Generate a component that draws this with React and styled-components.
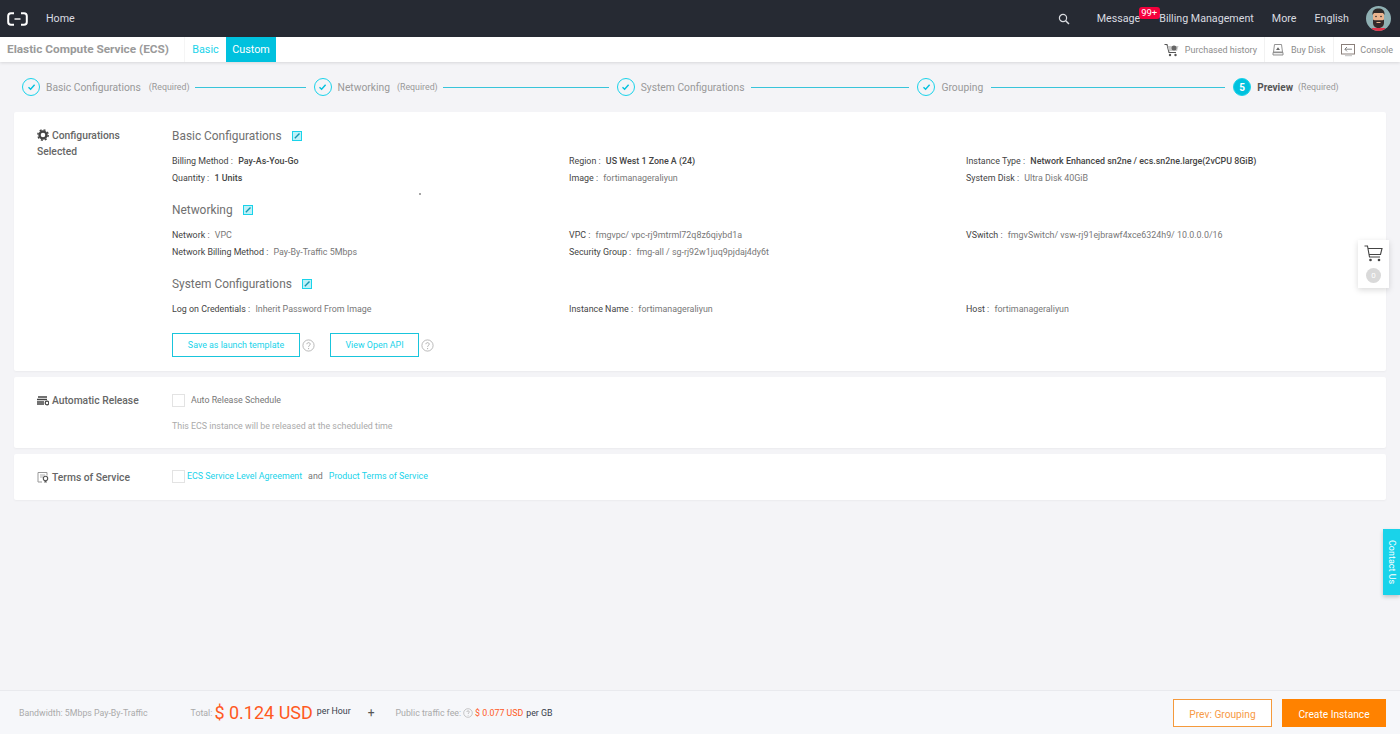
import React from "react";
import styled, { createGlobalStyle } from "styled-components";

const Global = createGlobalStyle`
  html, body { margin: 0; padding: 0; height: 100%; overflow: hidden; }
  body { font-family: Roboto, "Liberation Sans", sans-serif; background: #f4f4f7; color: #555; }
  * { box-sizing: border-box; }
`;

const Page = styled.div`
  position: relative;
  height: 734px;
  display: flex;
  flex-direction: column;
`;

const TopBar = styled.header`
  height: 37px;
  flex: none;
  background: #262a33;
  display: flex;
  align-items: center;
  padding: 0 9px 0 7px;
  color: #d9dbe0;
  font-size: 10.7px;
`;
const Logo = styled.svg`
  width: 21px;
  height: 14px;
  margin-right: 18px;
`;
const Spacer = styled.div`flex: 1;`;
const NavItem = styled.span`
  position: relative;
  margin-left: ${(p) => p.$ml || 0}px;
  white-space: nowrap;
`;
const Badge = styled.span`
  position: absolute;
  left: 42px;
  top: -5px;
  width: 21px;
  height: 12px;
  border-radius: 3px;
  background: #f5003c;
  color: #fff;
  font-size: 9.5px;
  line-height: 12px;
  text-align: center;
`;
const AvatarSvg = styled.svg`
  width: 25px;
  height: 25px;
  margin-left: 17px;
  border-radius: 50%;
`;

const SubBar = styled.div`
  height: 25px;
  flex: none;
  background: #fff;
  box-shadow: 0 1px 3px rgba(0, 0, 0, 0.12);
  display: flex;
  align-items: stretch;
  position: relative;
`;
const ProductTitle = styled.div`
  width: 184px;
  padding-left: 7px;
  font-size: 11.8px;
  font-weight: 700;
  color: #9a9a9a;
  line-height: 24px;
  white-space: nowrap;
`;
const Tab = styled.div`
  width: ${(p) => p.$w}px;
  text-align: center;
  font-size: 10.8px;
  line-height: 25px;
  color: ${(p) => (p.$active ? "#fff" : "#19d3ea")};
  background: ${(p) => (p.$active ? "#00c1de" : "transparent")};
  border-left: ${(p) => (p.$active ? "none" : "1px solid #f5f5f5")};
`;
const QuickLink = styled.div`
  display: flex;
  align-items: center;
  padding: 0 ${(p) => p.$pr}px 0 ${(p) => (p.$first ? 8 : 7)}px;
  gap: ${(p) => p.$gap}px;
  font-size: 9px;
  color: #8c8c8c;
  border-left: ${(p) => (p.$first ? "none" : "1px solid #f2f2f2")};
  white-space: nowrap;
`;

const Main = styled.main`
  flex: 1;
  padding: 0 14px;
`;
const Steps = styled.div`
  height: 50px;
  display: flex;
  align-items: center;
  padding-left: 8px;
`;
const StepCircle = styled.div`
  width: 18px;
  height: 18px;
  flex: none;
  border-radius: 50%;
  border: 1px solid #19d3ea;
  display: flex;
  align-items: center;
  justify-content: center;
  color: #00c1de;
  background: ${(p) => (p.$current ? "#00c1de" : "transparent")};
`;
const StepNumber = styled.span`
  color: #fff;
  font-size: 10px;
  font-weight: 700;
`;
const StepLabel = styled.span`
  margin-left: 6px;
  font-size: ${(p) => (p.$current ? 10 : 10.3)}px;
  white-space: nowrap;
  color: ${(p) => (p.$current ? "#555" : "#999")};
  font-weight: ${(p) => (p.$current ? 700 : 400)};
`;
const StepHint = styled.span`
  margin-left: ${(p) => p.$ml || 8}px;
  font-size: 8.8px;
  color: #999;
  white-space: nowrap;
`;
const StepLine = styled.div`
  width: ${(p) => p.$w}px;
  height: 1px;
  flex: none;
  margin: 0 8px 0 ${(p) => p.$ml || 5}px;
  background: #38c4da;
`;

const Card = styled.section`
  background: #fff;
  border-radius: 2px;
  box-shadow: 0 1px 2px rgba(0, 0, 0, 0.04);
  margin-bottom: 6px;
  height: ${(p) => p.$h}px;
  display: flex;
  padding-left: 23px;
`;
const SideTitle = styled.div`
  width: 135px;
  flex: none;
  padding-top: 16px;
  font-size: 10.3px;
  line-height: 16px;
  color: #666;
  font-weight: 500;
`;
const SideIcon = styled.svg`
  width: 12px;
  height: 12px;
  margin-right: 3px;
  vertical-align: -2px;
`;
const CardBody = styled.div`
  flex: 1;
  padding-top: ${(p) => p.$pt || 0}px;
`;
const SectionHead = styled.div`
  height: 16px;
  display: flex;
  align-items: center;
  gap: 10px;
  font-size: 11.9px;
  color: #707070;
  margin-bottom: 9px;
`;
const EditIcon = styled.svg`
  width: 10px;
  height: 10px;
`;
const Grid = styled.div`
  display: grid;
  grid-template-columns: 397px 397px 1fr;
  grid-auto-rows: 17px;
  margin-bottom: 15px;
  font-size: 8.9px;
  line-height: 17px;
  white-space: nowrap;
`;
const Key = styled.span`color: #444;`;
const Val = styled.span`
  color: ${(p) => (p.$strong ? "#444" : "#777")};
  font-weight: ${(p) => (p.$strong ? 500 : 400)};
  margin-left: 3px;
`;
const ActionRow = styled.div`
  display: flex;
  align-items: center;
`;
const OutlineButton = styled.button`
  width: ${(p) => p.$w}px;
  height: 24px;
  border: 1px solid #19c5dc;
  background: #fff;
  color: #19d3ea;
  font-family: inherit;
  font-size: 8.9px;
  padding: 0;
`;
const Help = styled.svg`
  width: ${(p) => p.$s || 13}px;
  height: ${(p) => p.$s || 13}px;
  margin: 0 ${(p) => p.$mr || 0}px 0 ${(p) => p.$ml || 2}px;
  flex: none;
`;
const CheckRow = styled.div`
  display: flex;
  align-items: center;
  font-size: 8.85px;
  color: #777;
  height: 14px;
`;
const Checkbox = styled.span`
  width: 13px;
  height: 13px;
  flex: none;
  background: #fff;
  border: 1px solid #e3e3e3;
  margin-right: ${(p) => p.$mr}px;
`;
const Muted = styled.div`
  margin-top: 14px;
  font-size: 8.85px;
  color: #aaa;
`;
const Link = styled.span`color: #19d3ea;`;
const Conj = styled.span`margin: 0 6px;`;
const Dot = styled.span`
  position: absolute;
  left: 419px;
  top: 193px;
  width: 2px;
  height: 2px;
  border-radius: 50%;
  background: #888;
`;

const Footer = styled.footer`
  height: 44px;
  flex: none;
  background: #f6f7fa;
  border-top: 1px solid #e9eaee;
  display: flex;
  align-items: center;
  padding: 0 14px 0 19px;
  font-size: 8.8px;
  color: #aaa;
  white-space: nowrap;
`;
const Total = styled.span`
  margin-left: ${(p) => p.$ml || 0}px;
`;
const Price = styled.span`
  font-size: ${(p) => p.$fs}px;
  color: #ff5a1f;
  margin: 0 ${(p) => p.$mr}px 0 ${(p) => p.$ml}px;
`;
const Per = styled.span`
  color: #373d4b;
  margin-bottom: ${(p) => p.$mb || 0}px;
`;
const Plus = styled.span`
  margin: 0 21px 0 17px;
  font-size: 12px;
  color: #555;
`;
const PrevButton = styled.button`
  width: 99px;
  height: 28px;
  background: #fff;
  border: 1px solid #f59a3c;
  color: #f79a45;
  font-family: inherit;
  font-size: 10.2px;
  margin-left: auto;
  padding: 3px 0 0;
`;
const CreateButton = styled.button`
  width: 104px;
  height: 28px;
  background: #ff8200;
  border: none;
  color: #fff;
  font-family: inherit;
  font-size: 10.2px;
  margin-left: 10px;
  padding: 3px 0 0;
`;

const CartWidget = styled.div`
  position: absolute;
  left: 1358px;
  top: 240px;
  width: 31px;
  height: 48px;
  background: #fff;
  box-shadow: 0 2px 6px rgba(0, 0, 0, 0.15);
  display: flex;
  flex-direction: column;
  align-items: center;
  padding-top: 5px;
  gap: 6px;
`;
const CartCount = styled.span`
  width: 15px;
  height: 15px;
  border-radius: 50%;
  background: #d9d9d9;
  color: #fff;
  font-size: 8px;
  line-height: 15px;
  text-align: center;
`;
const Contact = styled.div`
  position: absolute;
  left: 1383px;
  top: 529px;
  width: 17px;
  height: 66px;
  background: #19d3ea;
  box-shadow: 0 2px 4px rgba(0, 0, 0, 0.2);
  color: #fff;
  font-size: 9px;
  padding-left: 1px;
  writing-mode: vertical-rl;
  display: flex;
  align-items: center;
  justify-content: center;
`;

const Check = () => (
  <svg width="9" height="8" viewBox="0 0 9 8">
    <path d="M1.500 4.200 3.600 6.200 7.600 1.800" fill="none" stroke="#00c1de" strokeWidth="1.400" />
  </svg>
);
const Edit = () => (
  <EditIcon viewBox="0 0 10 10">
    <rect x="0.500" y="0.500" width="9" height="9" fill="#bdf1f8" stroke="#19d3ea" />
    <path d="M2.800 7.200 7.500 2.500" stroke="#1597b0" strokeWidth="1.400" />
  </EditIcon>
);
const HelpIcon = (p) => (
  <Help viewBox="0 0 13 13" {...p}>
    <circle cx="6.500" cy="6.500" r="5.600" fill="none" stroke="#a8a8a8" strokeWidth="0.800" />
    <path d="M4.900 5.200c0-2.100 3.300-2.100 3.300 0 0 1.200-1.600 1.200-1.600 2.600" fill="none" stroke="#a8a8a8" strokeWidth="0.900" />
    <circle cx="6.600" cy="9.600" r="0.600" fill="#a8a8a8" />
  </Help>
);

export default function App() {
  return (
    <Page>
      <Global />
      <TopBar>
        <Logo viewBox="0 0 21 14">
          <path d="M7 1.200H4C2.200 1.200 1.200 2.200 1.200 4v6c0 1.800 1 2.800 2.800 2.800h3M14 1.200h3c1.800 0 2.800 1 2.800 2.800v6c0 1.800-1 2.800-2.800 2.800h-3" fill="none" stroke="#fff" strokeWidth="2" />
          <path d="M7.500 7h6" stroke="#fff" strokeWidth="1.400" />
        </Logo>
        <NavItem>Home</NavItem>
        <Spacer />
        <svg width="12" height="12" viewBox="0 0 12 12">
          <circle cx="5" cy="5" r="3.600" fill="none" stroke="#d9dbe0" strokeWidth="1.200" />
          <path d="M7.700 7.700 11 11" stroke="#d9dbe0" strokeWidth="1.500" />
        </svg>
        <NavItem $ml={27}>
          Message<Badge>99+</Badge>
        </NavItem>
        <NavItem $ml={19}>Billing Management</NavItem>
        <NavItem $ml={18}>More</NavItem>
        <NavItem $ml={18}>English</NavItem>
        <AvatarSvg viewBox="0 0 25 25">
          <rect width="25" height="25" fill="#8fb0b3" />
          <rect x="6" y="22" width="13" height="3" fill="#e0344b" />
          <path d="M7 7h11v9c0 4-2.500 6-5.500 6S7 20 7 16z" fill="#eab58f" />
          <path d="M6.500 9c-.5-5 2.500-6.500 6-6.500s6.500 1.500 6 6.500l-1.500-2H8z" fill="#2e2a28" />
          <path d="M7 13.500c1.500 1 3 .8 5.500.8s4 .2 5.500-.8v3.500c0 3-2.500 5-5.500 5S7 20 7 17z" fill="#33292a" />
          <path d="M10.500 16.500h4" stroke="#eab58f" strokeWidth="1" />
          <circle cx="10" cy="10.500" r="0.800" fill="#2e2a28" />
          <circle cx="15" cy="10.500" r="0.800" fill="#2e2a28" />
        </AvatarSvg>
      </TopBar>

      <SubBar>
        <ProductTitle>Elastic Compute Service (ECS)</ProductTitle>
        <Tab $w={42}>Basic</Tab>
        <Tab $w={50} $active>Custom</Tab>
        <Spacer />
        <QuickLink $first $pr={7} $gap={6}>
          <svg width="15" height="14" viewBox="0 0 15 14">
            <path d="M0.500 1.500h2.500l2 8h7" fill="none" stroke="#555" strokeWidth="1.100" />
            <path d="M3.500 3h11l-1.500 5h-8z" fill="#c8c8c8" />
            <circle cx="10" cy="5" r="2.500" fill="#666" />
            <circle cx="6" cy="12" r="1.200" fill="#555" />
            <circle cx="11.500" cy="12" r="1.200" fill="#555" />
          </svg>
          Purchased history
        </QuickLink>
        <QuickLink $pr={8} $gap={7}>
          <svg width="12" height="13" viewBox="0 0 12 13">
            <path d="M2.500 1.500h7l1 7.500h-9z" fill="none" stroke="#888" strokeWidth="0.900" />
            <path d="M1 9.500h10v2.500H1z" fill="#eee" stroke="#888" strokeWidth="0.900" />
            <path d="M4 7h4L6 4.200z" fill="#666" />
          </svg>
          Buy Disk
        </QuickLink>
        <QuickLink $pr={7} $gap={5}>
          <svg width="14" height="14" viewBox="0 0 14 14">
            <rect x="0.500" y="1.500" width="13" height="9.500" fill="none" stroke="#8a7f7a" />
            <path d="M11 6.200H4M6 4 3.800 6.200 6 8.400" fill="none" stroke="#666" strokeWidth="0.800" />
            <path d="M4 12.500h7" stroke="#ccc" strokeWidth="1.500" />
          </svg>
          Console
        </QuickLink>
      </SubBar>

      <Main>
        <Steps>
          <StepCircle><Check /></StepCircle>
          <StepLabel>Basic Configurations</StepLabel>
          <StepHint>(Required)</StepHint>
          <StepLine $w={111} />
          <StepCircle><Check /></StepCircle>
          <StepLabel>Networking</StepLabel>
          <StepHint $ml={7}>(Required)</StepHint>
          <StepLine $w={166} />
          <StepCircle><Check /></StepCircle>
          <StepLabel>System Configurations</StepLabel>
          <StepLine $w={158} $ml={7} />
          <StepCircle><Check /></StepCircle>
          <StepLabel>Grouping</StepLabel>
          <StepLine $w={234} $ml={8} />
          <StepCircle $current><StepNumber>5</StepNumber></StepCircle>
          <StepLabel $current>Preview</StepLabel>
          <StepHint $ml={5}>(Required)</StepHint>
        </Steps>

        <Card $h={259}>
          <SideTitle>
            <SideIcon viewBox="0 0 12 12">
              <circle cx="6" cy="6" r="3.500" fill="none" stroke="#444" strokeWidth="2.400" />
              <circle cx="6" cy="6" r="5.200" fill="none" stroke="#444" strokeWidth="1.400" strokeDasharray="2 2.080" />
            </SideIcon>
            Configurations
            <br />
            Selected
          </SideTitle>
          <CardBody $pt={16}>
            <SectionHead>Basic Configurations <Edit /></SectionHead>
            <Grid>
              <span><Key>Billing Method :</Key> <Val $strong>Pay-As-You-Go</Val></span>
              <span><Key>Region :</Key> <Val $strong>US West 1 Zone A (24)</Val></span>
              <span><Key>Instance Type :</Key> <Val $strong>Network Enhanced sn2ne / ecs.sn2ne.large(2vCPU 8GiB)</Val></span>
              <span><Key>Quantity :</Key> <Val $strong>1 Units</Val></span>
              <span><Key>Image :</Key> <Val>fortimanageraliyun</Val></span>
              <span><Key>System Disk :</Key> <Val>Ultra Disk 40GiB</Val></span>
            </Grid>
            <SectionHead>Networking <Edit /></SectionHead>
            <Grid>
              <span><Key>Network :</Key> <Val>VPC</Val></span>
              <span><Key>VPC :</Key> <Val>fmgvpc/ vpc-rj9mtrml72q8z6qiybd1a</Val></span>
              <span><Key>VSwitch :</Key> <Val>fmgvSwitch/ vsw-rj91ejbrawf4xce6324h9/ 10.0.0.0/16</Val></span>
              <span><Key>Network Billing Method :</Key> <Val>Pay-By-Traffic 5Mbps</Val></span>
              <span><Key>Security Group :</Key> <Val>fmg-all / sg-rj92w1juq9pjdaj4dy6t</Val></span>
              <span />
            </Grid>
            <SectionHead>System Configurations <Edit /></SectionHead>
            <Grid>
              <span><Key>Log on Credentials :</Key> <Val>Inherit Password From Image</Val></span>
              <span><Key>Instance Name :</Key> <Val>fortimanageraliyun</Val></span>
              <span><Key>Host :</Key> <Val>fortimanageraliyun</Val></span>
            </Grid>
            <ActionRow>
              <OutlineButton $w={128}>Save as launch template</OutlineButton>
              <HelpIcon $ml={2} $mr={15} />
              <OutlineButton $w={89}>View Open API</OutlineButton>
              <HelpIcon />
            </ActionRow>
          </CardBody>
        </Card>

        <Card $h={71}>
          <SideTitle>
            <SideIcon viewBox="0 0 12 12">
              <path d="M1 3h9M0 5.500h10M0 8h7M0 10h7" stroke="#444" strokeWidth="1.300" />
              <circle cx="10" cy="9" r="1.800" fill="none" stroke="#444" strokeWidth="1.200" />
            </SideIcon>
            Automatic Release
          </SideTitle>
          <CardBody $pt={16}>
            <CheckRow><Checkbox $mr={6} />Auto Release Schedule</CheckRow>
            <Muted>This ECS instance will be released at the scheduled time</Muted>
          </CardBody>
        </Card>

        <Card $h={46}>
          <SideTitle>
            <SideIcon viewBox="0 0 12 12">
              <path d="M1 1.500h9v3M1 1.500v9.500h4" fill="none" stroke="#999" strokeWidth="1" />
              <path d="M3 4h5M3 6h3" stroke="#999" strokeWidth="0.800" />
              <circle cx="8.500" cy="7.500" r="2.200" fill="none" stroke="#555" strokeWidth="1.100" />
              <path d="M7.500 9.500V12l1-.8 1 .8V9.500" fill="#555" />
            </SideIcon>
            Terms of Service
          </SideTitle>
          <CardBody $pt={15}>
            <CheckRow>
              <Checkbox $mr={2} />
              <Link>ECS Service Level Agreement</Link>
              <Conj>and</Conj>
              <Link>Product Terms of Service</Link>
            </CheckRow>
          </CardBody>
        </Card>
      </Main>

      <Footer>
        <span>Bandwidth: 5Mbps Pay-By-Traffic</span>
        <Total $ml={43}>Total:</Total>
        <Price $fs={18} $ml={2} $mr={4}>$ 0.124 USD</Price>
        <Per $mb={3}>per Hour</Per>
        <Plus>+</Plus>
        <span>Public traffic fee:</span>
        <HelpIcon $s={10} $ml={2} />
        <Price $fs={8.8} $ml={2} $mr={3}>$ 0.077 USD</Price>
        <Per>per GB</Per>
        <PrevButton>Prev: Grouping</PrevButton>
        <CreateButton>Create Instance</CreateButton>
      </Footer>

      <Dot />
      <CartWidget>
        <svg width="19" height="17" viewBox="0 0 19 17">
          <path d="M0.500 1h3l2 11h10.500M4 3.500h14l-1.500 6H5" fill="none" stroke="#444" strokeWidth="1.100" />
          <circle cx="6.500" cy="15" r="1.300" fill="#444" />
          <circle cx="15" cy="15" r="1.300" fill="#444" />
        </svg>
        <CartCount>0</CartCount>
      </CartWidget>
      <Contact>Contact Us</Contact>
    </Page>
  );
}
